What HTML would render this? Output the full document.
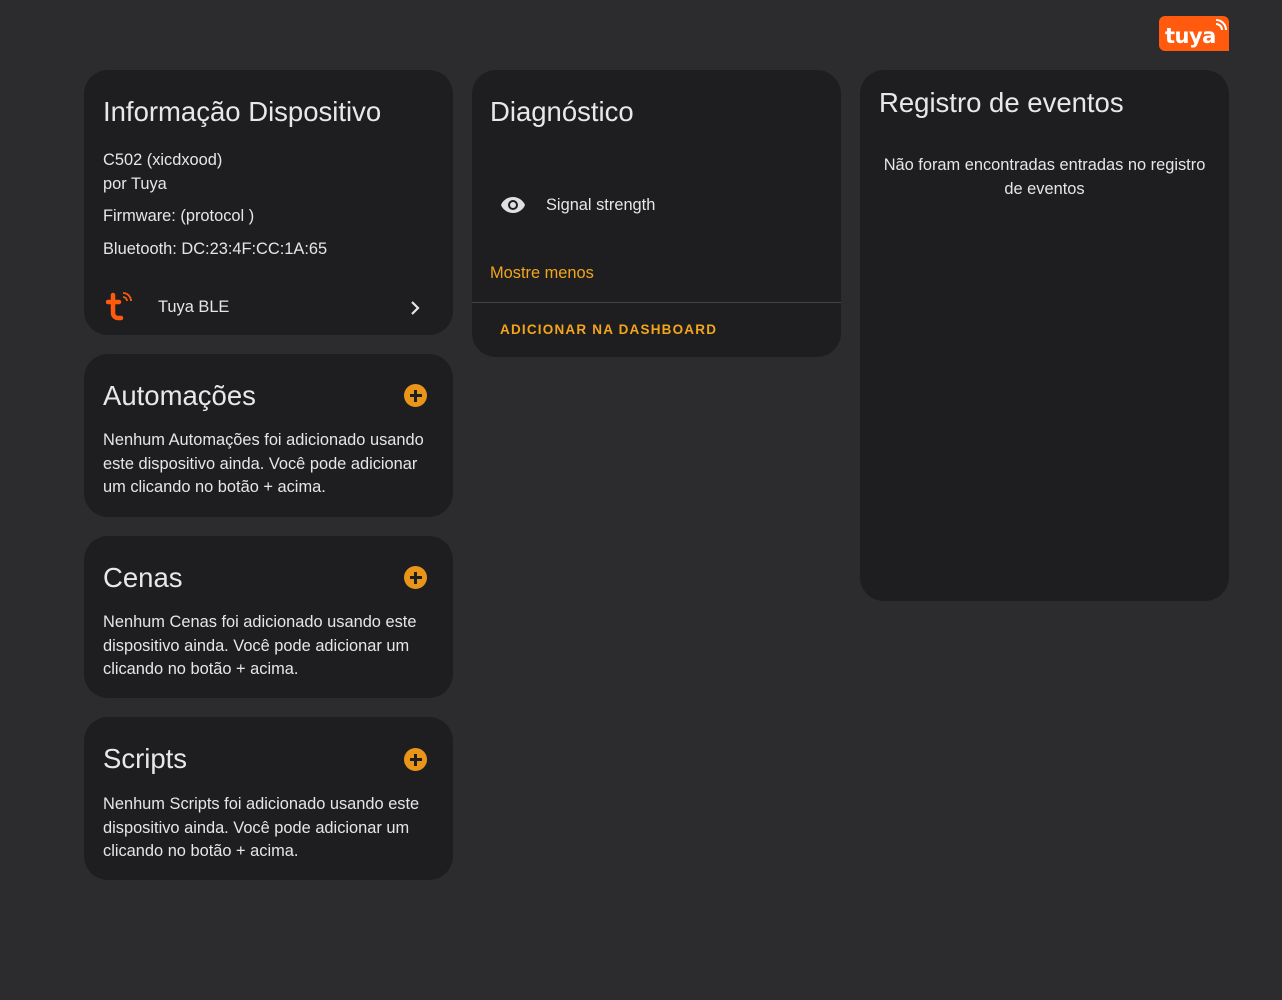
<!DOCTYPE html><html><head><style>
body{margin:0;width:1282px;height:1000px;background:#2c2c2e;font-family:"Liberation Sans",sans-serif;color:#e1e1e1;position:relative;overflow:hidden}
.c{position:absolute;background:#1e1e20;border-radius:24px;box-sizing:border-box}
.t{position:absolute;font-size:27.5px;color:#e8e8e8;white-space:nowrap}
.p{position:absolute;font-size:16.4px;line-height:23.5px;color:#e6e6e6;white-space:nowrap}
.plus{position:absolute;width:23px;height:23px;border-radius:50%;background:#e8951a}
.plus:before{content:"";position:absolute;left:5.5px;top:10px;width:12px;height:2.6px;background:#1e1e20}
.plus:after{content:"";position:absolute;left:10.2px;top:5.5px;width:2.6px;height:12px;background:#1e1e20}
</style></head><body>
<svg style="position:absolute;left:1159px;top:16px" width="70" height="35" viewBox="0 0 70 35"><path d="M0 6a6 6 0 0 1 6-6h58a6 6 0 0 1 6 6v29H6a6 6 0 0 1-6-6z" fill="#ff5a0d"/><text x="6" y="27" font-family="DejaVu Sans" font-weight="bold" font-size="21" fill="#fff" letter-spacing="-0.5">tuya</text><path d="M57 8a6 6 0 0 1 6 6M57 4a10 10 0 0 1 10 10" stroke="#fff" stroke-width="2" fill="none"/></svg>

<div class="c" style="left:84px;top:70px;width:369px;height:265px">
<div class="t" style="left:19px;top:26px">Informação Dispositivo</div>
<div class="p" style="left:19px;top:79px">C502 (xicdxood)<br>por Tuya</div>
<div class="p" style="left:19px;top:135px">Firmware: (protocol )</div>
<div class="p" style="left:19px;top:168px">Bluetooth: DC:23:4F:CC:1A:65</div>
<svg style="position:absolute;left:22px;top:222px" width="28" height="30" viewBox="0 0 28 30"><path d="M7 3v18a5 5 0 0 0 5 5h3M2 10h11" stroke="#ff5a0d" stroke-width="4.5" fill="none" stroke-linecap="round"/><path d="M17 5a4 4 0 0 1 4 4M17 1a8 8 0 0 1 8 8" stroke="#ff5a0d" stroke-width="1.8" fill="none"/></svg>
<div class="p" style="left:74px;top:226px">Tuya BLE</div>
<svg style="position:absolute;left:325px;top:230px" width="12" height="16"><path d="M3 2l6 6-6 6" stroke="#e6e6e6" stroke-width="2.2" fill="none"/></svg>
</div>

<div class="c" style="left:84px;top:354px;width:369px;height:163px">
<div class="t" style="left:19px;top:26px">Automações</div><div class="plus" style="left:320px;top:30px"></div>
<div class="p" style="left:19px;top:75px">Nenhum Automações foi adicionado usando<br>este dispositivo ainda. Você pode adicionar<br>um clicando no botão + acima.</div></div>

<div class="c" style="left:84px;top:536px;width:369px;height:162px">
<div class="t" style="left:19px;top:26px">Cenas</div><div class="plus" style="left:320px;top:30px"></div>
<div class="p" style="left:19px;top:75px">Nenhum Cenas foi adicionado usando este<br>dispositivo ainda. Você pode adicionar um<br>clicando no botão + acima.</div></div>

<div class="c" style="left:84px;top:717px;width:369px;height:163px">
<div class="t" style="left:19px;top:26px">Scripts</div><div class="plus" style="left:320px;top:31px"></div>
<div class="p" style="left:19px;top:76px">Nenhum Scripts foi adicionado usando este<br>dispositivo ainda. Você pode adicionar um<br>clicando no botão + acima.</div></div>

<div class="c" style="left:472px;top:70px;width:369px;height:287px">
<div class="t" style="left:18px;top:26px">Diagnóstico</div>
<svg style="position:absolute;left:28px;top:126px" width="26" height="18" viewBox="0 0 26 18"><path d="M13 1C7 1 2.5 5 1 9c1.5 4 6 8 12 8s10.5-4 12-8C23.5 5 19 1 13 1z" fill="#e0e0e0"/><circle cx="13" cy="9" r="5" fill="#1e1e20"/><circle cx="13" cy="9" r="3" fill="#e0e0e0"/></svg>
<div class="p" style="left:74px;top:124px">Signal strength</div>
<div class="p" style="left:18px;top:192px;color:#f3a51c">Mostre menos</div>
<div style="position:absolute;left:0;right:0;top:232px;height:1px;background:#444"></div>
<div style="position:absolute;left:28px;top:252px;font-size:13.5px;font-weight:bold;letter-spacing:1.2px;color:#f3a51c">ADICIONAR NA DASHBOARD</div>
</div>

<div class="c" style="left:860px;top:70px;width:369px;height:531px">
<div class="t" style="left:19px;top:17px">Registro de eventos</div>
<div class="p" style="left:0;right:0;top:84px;text-align:center">Não foram encontradas entradas no registro<br>de eventos</div></div>
</body></html>
